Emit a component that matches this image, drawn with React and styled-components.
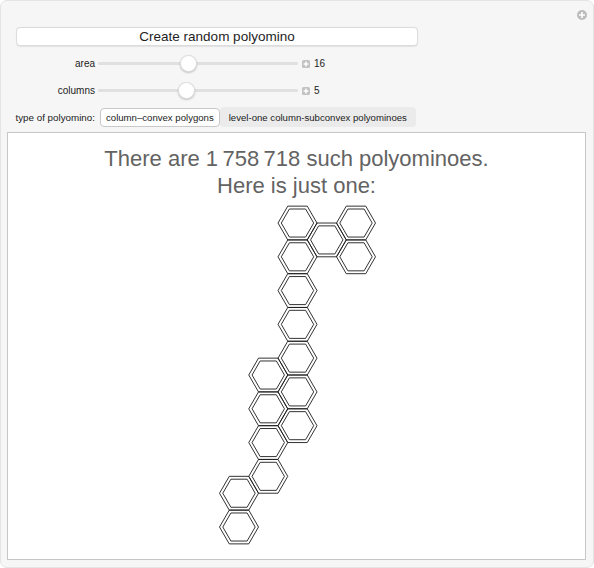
import React from "react";
import styled, { createGlobalStyle } from "styled-components";

const GlobalStyle = createGlobalStyle`
  html, body {
    margin: 0;
    padding: 0;
    background: #ffffff;
  }
  * {
    box-sizing: border-box;
  }
`;

const Frame = styled.div`
  position: relative;
  width: 594px;
  height: 568px;
  padding: 26px 7px 7px 6px;
  background: #f6f6f6;
  border: 1px solid #e4e4e4;
  border-radius: 7px;
  font-family: "Liberation Sans", Arial, sans-serif;
  color: #222;
  display: flex;
  flex-direction: column;
`;

const CornerButton = styled.div`
  position: absolute;
  top: 9px;
  right: 6px;
  width: 10px;
  height: 10px;
  border-radius: 50%;
  background: #bcbcbc;
  display: flex;
  align-items: center;
  justify-content: center;
`;

const ActionButton = styled.button`
  margin-left: 9px;
  width: 402px;
  height: 19px;
  padding: 0;
  border: 1px solid #dcdcdc;
  border-radius: 4px;
  background: #ffffff;
  font-family: inherit;
  font-size: 13.5px;
  color: #1e1e1e;
  box-shadow: 0 0.5px 1px rgba(0, 0, 0, 0.08);
`;

const Controls = styled.div`
  margin-top: 4px;
  display: flex;
  flex-direction: column;
`;

const Row = styled.div`
  display: flex;
  align-items: center;
  height: ${(p) => p.$height || 27}px;
`;

const Label = styled.div`
  width: 88px;
  text-align: right;
  font-size: ${(p) => p.$size || 10}px;
  color: #222;
  white-space: nowrap;
`;

const Track = styled.div`
  position: relative;
  margin-left: 3px;
  width: 200px;
  height: 3px;
  border-radius: 2px;
  background: #e0e0e0;
`;

const Thumb = styled.div`
  position: absolute;
  top: 50%;
  width: 17px;
  height: 17px;
  margin: -8.5px 0 0 -8.5px;
  border-radius: 50%;
  background: #ffffff;
  border: 0.5px solid rgba(0, 0, 0, 0.12);
  box-shadow: 0 1px 2px rgba(0, 0, 0, 0.22);
`;

const PlusBox = styled.div`
  margin-left: 4px;
  width: 8px;
  height: 8px;
  border-radius: 1.5px;
  background: #c2c2c2;
  display: flex;
  align-items: center;
  justify-content: center;
`;

const Value = styled.div`
  margin-left: 4px;
  font-size: 10px;
  color: #222;
`;

const Tabs = styled.div`
  margin-left: 5px;
  display: flex;
  align-items: center;
`;

const Tab = styled.div`
  height: ${(p) => (p.$active ? 19 : 20)}px;
  padding: 0 ${(p) => (p.$active ? 5 : 8)}px;
  display: flex;
  align-items: center;
  border-radius: 4px;
  font-size: 9.6px;
  color: #222;
  white-space: nowrap;
  background: ${(p) => (p.$active ? "#ffffff" : "#ebebeb")};
  border: 1px solid ${(p) => (p.$active ? "#c9c9c9" : "transparent")};
`;

const Output = styled.div`
  margin-top: 2px;
  flex: 1;
  background: #ffffff;
  border: 1px solid #c6c6c6;
  padding-top: 13px;
  display: flex;
  flex-direction: column;
  align-items: center;
`;

const Caption = styled.div`
  font-size: 22px;
  line-height: 26.6px;
  color: #636363;
  text-align: center;
`;

const Drawing = styled.svg`
  margin-top: 5px;
  display: block;
`;

const PlusGlyph = ({ size, stroke }) => (
  <svg width={size} height={size} viewBox="0 0 10 10">
    <path d="M5 2v6M2 5h6" stroke="#ffffff" strokeWidth={stroke} />
  </svg>
);

const Slider = ({ label, value, min, max }) => {
  const pos = ((value - min) / (max - min)) * 100;
  return (
    <Row>
      <Label>{label}</Label>
      <Track>
        <Thumb style={{ left: `${pos}%` }} />
      </Track>
      <PlusBox>
        <PlusGlyph size={8} stroke={1.8} />
      </PlusBox>
      <Value>{value}</Value>
    </Row>
  );
};

// hex cells: [column, row] with half-row offsets
const R = 19.5;
const H = Math.sqrt(3) * R;
const cells = [
  [0, 0], [0, 1],
  [1, 1.5], [1, 2.5], [1, 3.5], [1, 4.5],
  [2, 3], [2, 4], [2, 5], [2, 6], [2, 7], [2, 8], [2, 9],
  [3, 8.5],
  [4, 8], [4, 9],
];

const hexPoints = (cx, cy, r) =>
  [0, 1, 2, 3, 4, 5]
    .map((i) => {
      const a = (Math.PI / 3) * i;
      return `${(cx + r * Math.cos(a)).toFixed(2)},${(cy + r * Math.sin(a)).toFixed(2)}`;
    })
    .join(" ");

const Polyomino = () => {
  const ox = 238 - 216;
  const oy = 527 - 204;
  return (
    <Drawing width="160" height="342" viewBox="0 0 160 342">
      {cells.map(([c, r], i) => {
        const cx = ox + c * 1.5 * R;
        const cy = oy - r * H;
        return (
          <g key={i} fill="none" stroke="#1c1c1c" strokeWidth="0.9">
            <polygon points={hexPoints(cx, cy, R)} />
            <polygon points={hexPoints(cx, cy, 16.2)} />
          </g>
        );
      })}
    </Drawing>
  );
};

export default function App() {
  return (
    <>
      <GlobalStyle />
      <Frame>
        <CornerButton>
          <PlusGlyph size={10} stroke={1.6} />
        </CornerButton>
        <ActionButton>Create random polyomino</ActionButton>
        <Controls>
          <Slider label="area" value={16} min={1} max={34} />
          <Slider label="columns" value={5} min={1} max={10} />
          <Row $height={26}>
            <Label $size={9.8}>type of polyomino:</Label>
            <Tabs>
              <Tab $active>column–convex polygons</Tab>
              <Tab>level-one column-subconvex polyominoes</Tab>
            </Tabs>
          </Row>
        </Controls>
        <Output>
          <Caption>There are 1{"\u2009"}758{"\u2009"}718 such polyominoes.</Caption>
          <Caption>Here is just one:</Caption>
          <Polyomino />
        </Output>
      </Frame>
    </>
  );
}
